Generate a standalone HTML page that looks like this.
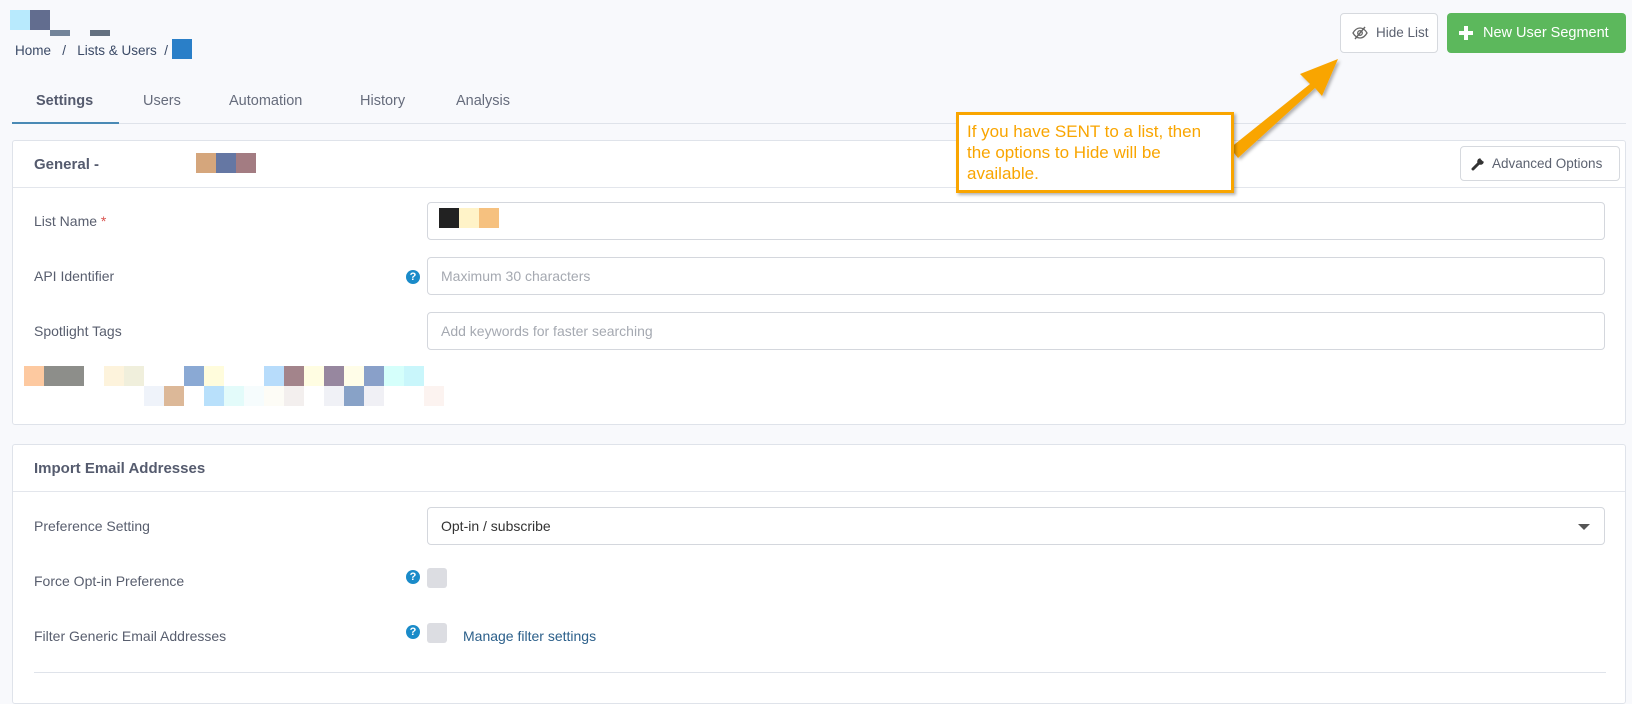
<!DOCTYPE html>
<html><head><meta charset="utf-8"><style>
*{box-sizing:border-box;margin:0;padding:0}
body{width:1632px;height:679px;overflow:hidden;background:#f8f9fc;font-family:"Liberation Sans",sans-serif;position:relative;color:#555b6e}
.a{position:absolute}
.b{position:absolute}
.card{position:absolute;left:12px;width:1614px;background:#fff;border:1px solid #dfe3ea;border-radius:3px}
.lbl{position:absolute;left:34px;font-size:14px;color:#585e6e}
.inp{position:absolute;left:427px;width:1178px;height:38px;border:1px solid #d4d7dd;border-radius:4px;background:#fff;font-size:14px;padding-left:13px;line-height:36px;color:#a5a9b1}
.q{position:absolute;width:14px;height:14px;border-radius:50%;background:#1a8bc9;color:#fff;font-size:11px;font-weight:bold;text-align:center;line-height:14px}
.cb{position:absolute;left:427px;width:20px;height:20px;border-radius:3px;background:#dcdde2}
.tab{position:absolute;top:93px;font-size:14.5px;color:#666c7c}
</style></head><body>
<div class="b" style="left:10px;top:10px;width:20px;height:20px;background:#b8eafd"></div>
<div class="b" style="left:30px;top:10px;width:20px;height:20px;background:#626d8f"></div>
<div class="b" style="left:50px;top:30px;width:20px;height:6px;background:#73849a"></div>
<div class="b" style="left:90px;top:30px;width:20px;height:6px;background:#637080"></div>
<div class="a" style="left:15px;top:43px;font-size:13.5px;color:#3b4a66">Home&nbsp;&nbsp;&nbsp;/&nbsp;&nbsp;&nbsp;Lists &amp; Users&nbsp;&nbsp;/</div>
<div class="b" style="left:172px;top:39px;width:20px;height:20px;background:#2a7fc8"></div>

<div class="a" style="left:1340px;top:13px;width:98px;height:40px;border:1px solid #d6d9de;border-radius:4px;background:#fff;font-size:13.5px;color:#5c6270;line-height:38px;padding-left:35px">Hide List
<svg class="a" style="left:11px;top:12px" width="16" height="14" viewBox="0 0 16 14"><path d="M1 7c2-3.5 4.5-5 7-5s5 1.5 7 5c-2 3.5-4.5 5-7 5S3 10.5 1 7z" fill="none" stroke="#666" stroke-width="1.3"/><circle cx="8" cy="7" r="2.3" fill="none" stroke="#666" stroke-width="1.3"/><path d="M3 13L13 1" stroke="#666" stroke-width="1.4"/></svg></div>
<div class="a" style="left:1447px;top:13px;width:179px;height:40px;border-radius:4px;background:#5cb85c;color:#fff;font-size:14.5px;line-height:40px;padding-left:36px">New User Segment
<div class="b" style="left:12px;top:13px;width:14px;height:14px"><div class="b" style="left:5px;top:0;width:4px;height:14px;background:#fff"></div><div class="b" style="left:0;top:5px;width:14px;height:4px;background:#fff"></div></div></div>

<div class="tab" style="left:36px;font-weight:bold;color:#555b6e">Settings</div>
<div class="tab" style="left:143px">Users</div>
<div class="tab" style="left:229px">Automation</div>
<div class="tab" style="left:360px">History</div>
<div class="tab" style="left:456px">Analysis</div>
<div class="b" style="left:12px;top:123px;width:1614px;height:1px;background:#dfe3ea"></div>
<div class="b" style="left:12px;top:122px;width:107px;height:2px;background:#4a8ab5"></div>

<div class="card" style="top:140px;height:285px">
 <div class="b" style="left:0;top:46px;width:100%;height:1px;background:#e3e6ec"></div>
 <div class="a" style="left:21px;top:15px;font-size:15px;font-weight:bold;color:#555b6e">General -</div>
 <div class="b" style="left:183px;top:12px;width:20px;height:20px;background:#d5a67c"></div>
 <div class="b" style="left:203px;top:12px;width:20px;height:20px;background:#6577a3"></div>
 <div class="b" style="left:223px;top:12px;width:20px;height:20px;background:#a37c82"></div>
 <div class="a" style="left:1447px;top:5px;width:160px;height:35px;border:1px solid #d6d9de;border-radius:4px;font-size:13.5px;color:#5c6270;line-height:33px;padding-left:31px">Advanced Options
 <svg class="a" style="left:10px;top:10px" width="14" height="14" viewBox="0 0 14 14"><path d="M2 12L8 6" stroke="#333" stroke-width="3" stroke-linecap="round"/><circle cx="9.5" cy="4.5" r="3.3" fill="#333"/><path d="M10 1L13 4" stroke="#fff" stroke-width="2"/></svg></div>
</div>

<div class="lbl" style="top:213px">List Name <span style="color:#d9534f">*</span></div>
<div class="inp" style="top:202px"></div>
<div class="b" style="left:439px;top:208px;width:20px;height:20px;background:#222"></div>
<div class="b" style="left:459px;top:208px;width:20px;height:20px;background:#fff3c8"></div>
<div class="b" style="left:479px;top:208px;width:20px;height:20px;background:#f6c17f"></div>
<div class="lbl" style="top:268px">API Identifier</div>
<div class="q" style="left:406px;top:270px">?</div>
<div class="inp" style="top:257px">Maximum 30 characters</div>
<div class="lbl" style="top:323px">Spotlight Tags</div>
<div class="inp" style="top:312px">Add keywords for faster searching</div>

<div class="b" style="left:24px;top:366px;width:20px;height:20px;background:#fdc9a0"></div>
<div class="b" style="left:44px;top:366px;width:40px;height:20px;background:#8d8e8a"></div>
<div class="b" style="left:104px;top:366px;width:20px;height:20px;background:#fdf3dc"></div>
<div class="b" style="left:124px;top:366px;width:20px;height:20px;background:#f0efdc"></div>
<div class="b" style="left:184px;top:366px;width:20px;height:20px;background:#8aa9d4"></div>
<div class="b" style="left:204px;top:366px;width:20px;height:20px;background:#fffcdc"></div>
<div class="b" style="left:264px;top:366px;width:20px;height:20px;background:#b7dcfb"></div>
<div class="b" style="left:284px;top:366px;width:20px;height:20px;background:#a3848b"></div>
<div class="b" style="left:304px;top:366px;width:20px;height:20px;background:#fffde2"></div>
<div class="b" style="left:324px;top:366px;width:20px;height:20px;background:#97879f"></div>
<div class="b" style="left:344px;top:366px;width:20px;height:20px;background:#fffde8"></div>
<div class="b" style="left:364px;top:366px;width:20px;height:20px;background:#89a0c9"></div>
<div class="b" style="left:384px;top:366px;width:20px;height:20px;background:#d5fffb"></div>
<div class="b" style="left:404px;top:366px;width:20px;height:20px;background:#c9f6fb"></div>
<div class="b" style="left:144px;top:386px;width:20px;height:20px;background:#eff3fa"></div>
<div class="b" style="left:164px;top:386px;width:20px;height:20px;background:#dcb898"></div>
<div class="b" style="left:204px;top:386px;width:20px;height:20px;background:#b8e0fb"></div>
<div class="b" style="left:224px;top:386px;width:20px;height:20px;background:#e3fbfa"></div>
<div class="b" style="left:244px;top:386px;width:20px;height:20px;background:#f6fcfd"></div>
<div class="b" style="left:264px;top:386px;width:20px;height:20px;background:#fdfcf6"></div>
<div class="b" style="left:284px;top:386px;width:20px;height:20px;background:#f3efee"></div>
<div class="b" style="left:324px;top:386px;width:20px;height:20px;background:#f0f1f6"></div>
<div class="b" style="left:344px;top:386px;width:20px;height:20px;background:#88a2c7"></div>
<div class="b" style="left:364px;top:386px;width:20px;height:20px;background:#f0f0f5"></div>
<div class="b" style="left:424px;top:386px;width:20px;height:20px;background:#fcf3f0"></div>

<div class="card" style="top:444px;height:260px">
 <div class="b" style="left:0;top:46px;width:100%;height:1px;background:#e3e6ec"></div>
 <div class="a" style="left:21px;top:15px;font-size:15px;font-weight:bold;color:#555b6e">Import Email Addresses</div>
 <div class="b" style="left:21px;top:227px;width:1572px;height:1px;background:#dfe3ea"></div>
</div>
<div class="lbl" style="top:518px">Preference Setting</div>
<div class="inp" style="top:507px;color:#333">Opt-in / subscribe
<div class="b" style="right:14px;top:16px;width:0;height:0;border-left:6px solid transparent;border-right:6px solid transparent;border-top:6px solid #555"></div></div>
<div class="lbl" style="top:573px">Force Opt-in Preference</div>
<div class="q" style="left:406px;top:570px">?</div>
<div class="cb" style="top:568px"></div>
<div class="lbl" style="top:628px">Filter Generic Email Addresses</div>
<div class="q" style="left:406px;top:625px">?</div>
<div class="cb" style="top:623px"></div>
<div class="a" style="left:463px;top:628px;font-size:14px;color:#2b5f8a">Manage filter settings</div>

<svg class="a" style="left:0;top:0" width="1632" height="679"><defs><filter id="s"><feDropShadow dx="2" dy="2" stdDeviation="1.5" flood-opacity="0.3"/></filter></defs>
<path d="M1230 148 L1310 84 L1300 74 L1338 59 L1322 96 L1315 88 L1238 158 Z" fill="#f9a500" filter="url(#s)"/></svg>
<div class="a" style="left:956px;top:112px;width:278px;height:81px;background:#fff;border:3px solid #f9a500;box-shadow:2px 2px 3px rgba(0,0,0,.3);color:#f9a500;font-size:17px;line-height:21px;padding:6px 14px 0 8px">If you have SENT to a list, then the options to Hide will be available.</div>
</body></html>
